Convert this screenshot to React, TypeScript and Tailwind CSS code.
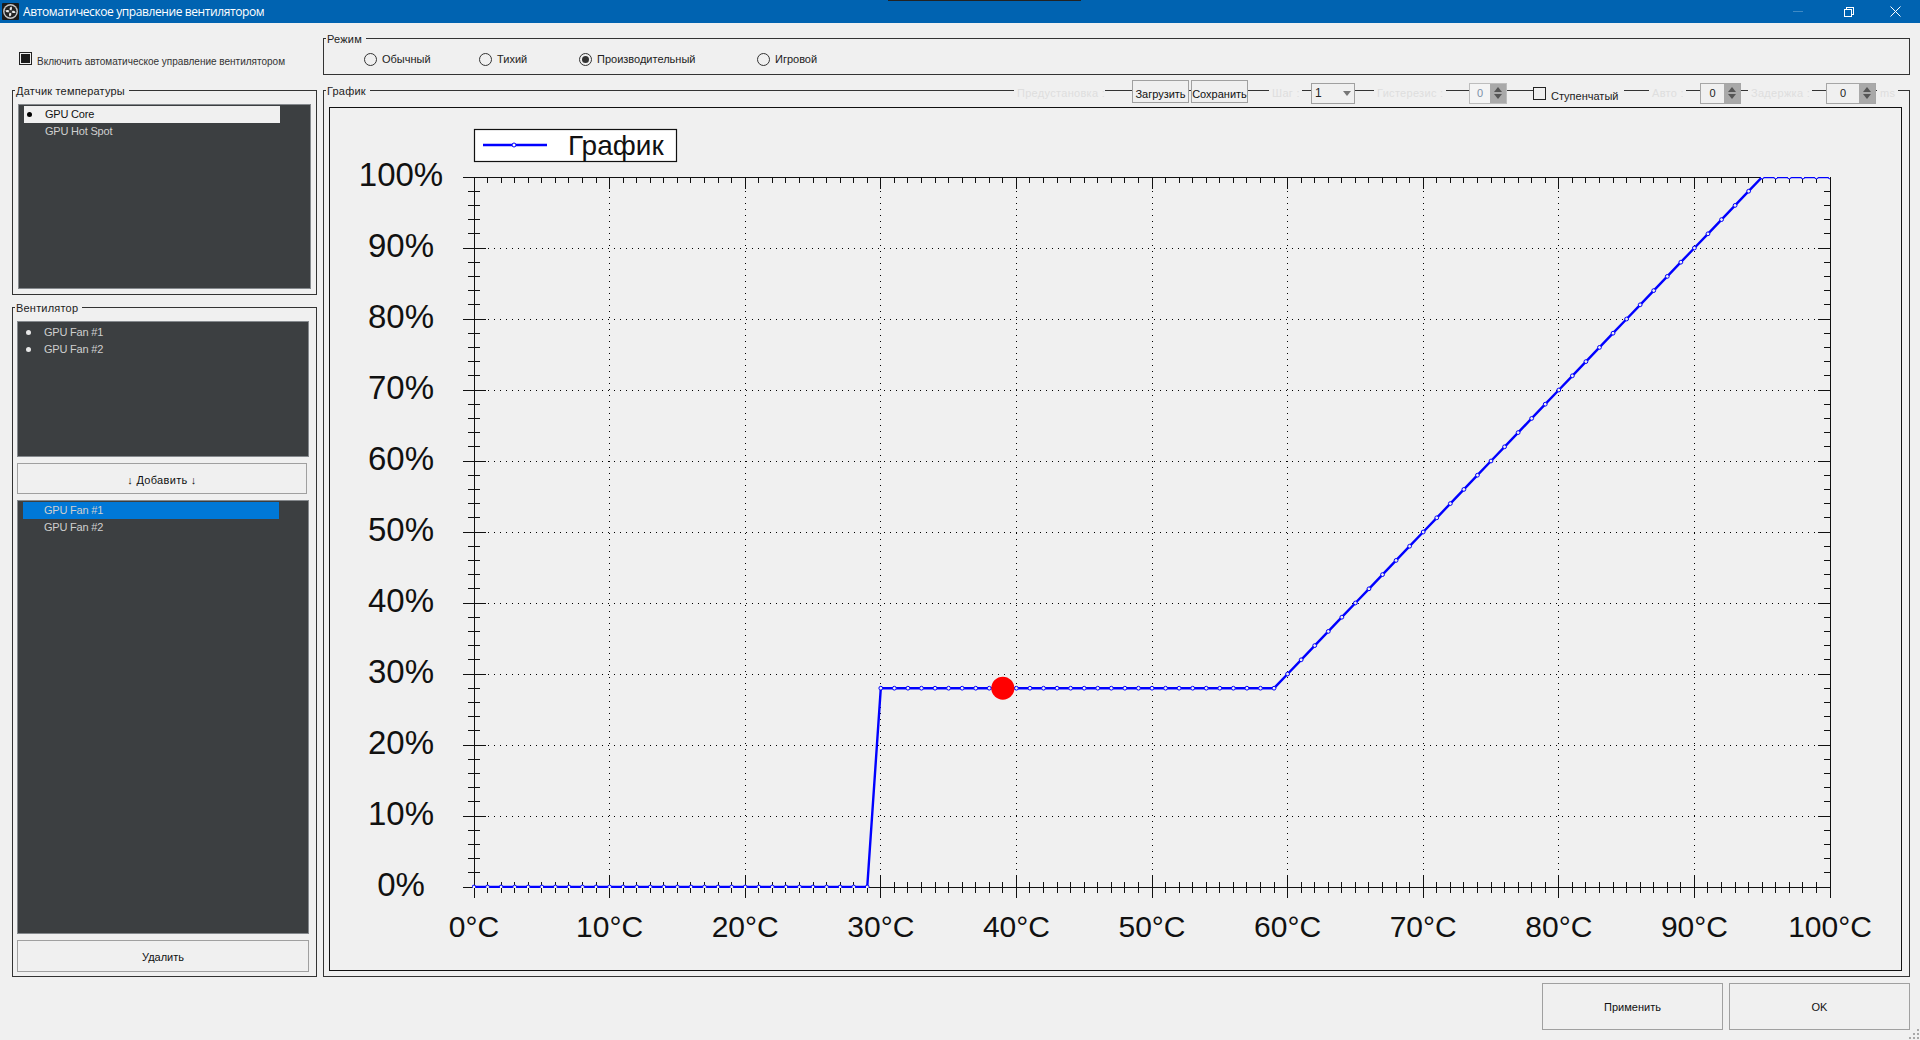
const BG = 'bg-[#f0f0f0]'

// plot area in page pixels, relative to the chart frame content (330,108)
const X0 = 144
const X_UNIT = 13.56
const Y0 = 779
const Y_UNIT = 7.1

const px = (t: number) => X0 + t * X_UNIT
const py = (v: number) => Y0 - v * Y_UNIT

const fanCurve = (t: number) => {
  if (t < 30) return 0
  if (t < 60) return 28
  return Math.min(100, (t - 45) * 2)
}

const TEMPS = Array.from({ length: 101 }, (_, i) => i)
const LEVELS = Array.from({ length: 51 }, (_, i) => i * 2)
const TENS = Array.from({ length: 11 }, (_, i) => i * 10)

function Chart() {
  const points = TEMPS.map((t) => `${px(t)},${py(fanCurve(t))}`).join(' ')
  const xEnd = px(100)
  const yTop = py(100)

  return (
    <svg width="1571" height="861" className="block">
      <defs>
        <clipPath id="plot">
          <rect x={X0 - 2} y={yTop} width={xEnd - X0 + 2} height={Y0 - yTop + 1} />
        </clipPath>
      </defs>

      {/* grid */}
      <g stroke="#000" strokeWidth="1" strokeDasharray="1 5" shapeRendering="crispEdges">
        {TENS.slice(1, 10).map((t) => (
          <line key={t} x1={px(t)} x2={px(t)} y1={yTop + 14} y2={Y0 - 17} />
        ))}
        {TENS.slice(1, 10).map((v) => (
          <line key={v} x1={X0 + 14} x2={xEnd - 14} y1={py(v)} y2={py(v)} />
        ))}
      </g>

      {/* axes */}
      <g stroke="#111" strokeWidth="1" shapeRendering="crispEdges">
        <line x1={X0 - 11} x2={xEnd} y1={yTop} y2={yTop} />
        <line x1={X0 - 11} x2={xEnd} y1={Y0} y2={Y0} />
        <line x1={X0} x2={X0} y1={yTop} y2={Y0 + 11} />
        <line x1={xEnd} x2={xEnd} y1={yTop} y2={Y0 + 11} />
        {TEMPS.map((t) => {
          const major = t % 10 === 0
          return (
            <g key={t}>
              <line x1={px(t)} x2={px(t)} y1={Y0 - (major ? 12 : 5)} y2={Y0 + (major ? 11 : 6)} />
              <line x1={px(t)} x2={px(t)} y1={yTop} y2={yTop + (major ? 12 : 6)} />
            </g>
          )
        })}
        {LEVELS.map((v) => {
          const major = v % 10 === 0
          return (
            <g key={v}>
              <line x1={X0 - (major ? 11 : 6)} x2={X0 + (major ? 12 : 6)} y1={py(v)} y2={py(v)} />
              <line x1={xEnd - (major ? 12 : 6)} x2={xEnd} y1={py(v)} y2={py(v)} />
            </g>
          )
        })}
      </g>

      {/* labels */}
      <g fill="#111" fontFamily="'Liberation Sans', Arial, sans-serif" textAnchor="middle">
        {TENS.map((v) => (
          <text key={v} x="71" y={py(v) + 8.5} fontSize="33">
            {v}%
          </text>
        ))}
        {TENS.map((t) => (
          <text key={t} x={px(t)} y="829" fontSize="30">
            {t}°C
          </text>
        ))}
      </g>

      {/* fan curve */}
      <g clipPath="url(#plot)">
        <polyline points={points} fill="none" stroke="#0000ff" strokeWidth="2.4" />
        {TEMPS.map((t) => (
          <circle key={t} cx={px(t)} cy={py(fanCurve(t))} r="1.9" fill="#f0f0f0" stroke="#0000ff" strokeWidth="1" />
        ))}
      </g>
      <circle cx={px(39)} cy={py(28)} r="11.5" fill="#ff0000" />

      {/* legend */}
      <rect x="144.5" y="21.5" width="202" height="32" fill="#fff" stroke="#111" strokeWidth="1.2" />
      <line x1="153" x2="217" y1="37" y2="37" stroke="#0000ff" strokeWidth="2.4" />
      <circle cx="184" cy="37" r="2" fill="#fff" stroke="#0000ff" strokeWidth="1" />
      <text x="238" y="47" fontSize="28" fill="#111" fontFamily="'Liberation Sans', Arial, sans-serif">
        График
      </text>
    </svg>
  )
}

function FanIcon() {
  return (
    <svg width="17" height="17" viewBox="0 0 17 17" className="shrink-0">
      <rect width="17" height="17" rx="1" fill="#1a1a1a" />
      <circle cx="8.5" cy="8.5" r="7.4" fill="#c8c8c8" />
      <circle cx="8.5" cy="8.5" r="6" fill="#222" />
      <path
        d="M8.5 8.5C7 6 7.5 4 9.5 3.4 10.5 5 10 7 8.5 8.5ZM8.5 8.5C11 7 13 7.5 13.6 9.5 12 10.5 10 10 8.5 8.5ZM8.5 8.5C10 11 9.5 13 7.5 13.6 6.5 12 7 10 8.5 8.5ZM8.5 8.5C6 10 4 9.5 3.4 7.5 5 6.5 7 7 8.5 8.5Z"
        fill="#e6e6e6"
      />
      <circle cx="8.5" cy="8.5" r="1.6" fill="#333" />
    </svg>
  )
}

function TitleBar() {
  return (
    <div className="relative flex h-[23px] shrink-0 items-center bg-[#0063b1] pl-[2px] text-white">
      <div className="absolute left-[888px] top-0 h-px w-[193px] bg-[#222]" />
      <FanIcon />
      <span className="ml-[4px] text-[12px] font-['Open_Sans','Liberation_Sans',sans-serif] tracking-[-0.4px]">
        Автоматическое управление вентилятором
      </span>
      <div className="ml-auto flex items-center">
        <div className="mr-[41px] h-px w-[10px] bg-[#3f8ac4]" />
        <svg width="10" height="10" viewBox="0 0 10 10" className="mr-[36px]" fill="none" stroke="#fff">
          <path d="M.5 2.5h7v7h-7zM2.5 2.5v-2h7v7h-2" shapeRendering="crispEdges" />
        </svg>
        <svg width="11" height="11" viewBox="0 0 11 11" className="mr-[19px]" fill="none" stroke="#fff">
          <path d="M.5.5l10 10M10.5.5l-10 10" />
        </svg>
      </div>
    </div>
  )
}

function GroupBox({ label, className, children }: { label?: string; className: string; children?: React.ReactNode }) {
  return (
    <div className={`relative border border-[#333] ${className}`}>
      {label && (
        <span className={`absolute left-[2px] top-[-7px] ${BG} pl-[1px] pr-[4px] text-[11px] leading-[14px] tracking-[0.2px] text-[#222]`}>
          {label}
        </span>
      )}
      {children}
    </div>
  )
}

function ListBox({ className, children }: { className: string; children: React.ReactNode }) {
  return <div className={`border border-[#85898d] bg-[#3c3f41] ${className}`}>{children}</div>
}

function ListRow({
  label,
  bullet,
  selected,
  focused,
}: {
  label: string
  bullet?: 'dark' | 'light'
  selected?: boolean
  focused?: boolean
}) {
  const rowBg = selected ? 'bg-[#0078d7]' : focused ? 'bg-[#f0f0f0]' : ''
  const textColor = focused ? 'text-[#111]' : 'text-[#cfcfcf]'
  return (
    <div className={`flex h-[17px] w-[256px] items-center text-[11px] tracking-[-0.2px] ${rowBg} ${textColor}`}>
      <span className="flex w-[21px] pl-[3px]">
        {bullet && <span className={`h-[5px] w-[5px] rounded-full ${bullet === 'dark' ? 'bg-black' : 'bg-[#e8e8e8]'}`} />}
      </span>
      {label}
    </div>
  )
}

function FlatButton({ className, children }: { className: string; children: React.ReactNode }) {
  return (
    <div className={`flex items-center justify-center border border-[#a0a0a0] text-[11px] text-[#111] ${className}`}>
      {children}
    </div>
  )
}

function Radio({ label, checked, className }: { label: string; checked?: boolean; className: string }) {
  return (
    <div className={`flex items-center ${className}`}>
      <span className="flex h-[13px] w-[13px] items-center justify-center rounded-full border border-[#333]">
        {checked && <span className="h-[7px] w-[7px] rounded-full bg-[#333]" />}
      </span>
      <span className="ml-[5px] text-[11px] text-[#222]">{label}</span>
    </div>
  )
}

function Muted({ className, children }: { className: string; children: React.ReactNode }) {
  return (
    <span className={`mt-[4px] shrink-0 whitespace-nowrap pl-[3px] text-[11px] leading-[14px] tracking-[0.3px] text-[#dedede] ${BG} ${className}`}>
      {children}
    </span>
  )
}

function Spinner({ value, textWidth, faded }: { value: string; textWidth: string; faded?: boolean }) {
  return (
    <div className={`mt-[4px] flex h-[21px] shrink-0 items-stretch border ${faded ? 'border-[#bdbdbd] bg-[#f4f4f4]' : `border-[#a6a6a6] ${BG}`}`}>
      <span className={`flex items-center justify-center text-[11px] ${faded ? 'text-[#7d8fa8]' : 'text-[#222]'} ${textWidth}`}>{value}</span>
      <span className="flex w-[16px] flex-col items-center justify-center gap-[2px] bg-[#a9a9a9]">
        <span className="h-0 w-0 border-x-[4px] border-b-[5px] border-x-transparent border-b-[#555]" />
        <span className="h-0 w-0 border-x-[4px] border-t-[5px] border-x-transparent border-t-[#555]" />
      </span>
    </div>
  )
}

function ChartToolbar() {
  return (
    <div className="absolute left-[690px] top-[-12px] flex h-[24px] items-center">
      <Muted className="w-[91px]">Предустановка :</Muted>
      <FlatButton className={`ml-[27px] mt-[1px] h-[23px] w-[57px] shrink-0 pt-[5px] text-[9px] ${BG}`}>Загрузить</FlatButton>
      <FlatButton className={`ml-[2px] mt-[1px] h-[23px] w-[57px] shrink-0 pt-[5px] text-[9px] ${BG}`}>Сохранить</FlatButton>
      <Muted className="ml-[21px] w-[33px]">Шаг :</Muted>
      <div className={`ml-[9px] mt-[4px] flex h-[21px] w-[44px] shrink-0 items-center justify-between border border-[#a0a0a0] px-[3px] ${BG}`}>
        <span className="text-[12px] text-[#222]">1</span>
        <span className="h-0 w-0 border-x-[4px] border-t-[5px] border-x-transparent border-t-[#777]" />
      </div>
      <Muted className="ml-[19px] w-[72px]">Гистерезис :</Muted>
      <div className="ml-[23px]">
        <Spinner value="0" textWidth="w-[20px]" faded />
      </div>
      <div className="ml-[26px] mt-[5px] flex shrink-0 items-center">
        <span className={`h-[13px] w-[13px] border border-[#222] ${BG}`} />
        <span className={`w-[78px] ${BG} whitespace-nowrap pl-[5px] pt-[4px] text-[11px] leading-[14px] text-[#222]`}>Ступенчатый</span>
      </div>
      <Muted className="ml-[25px] w-[37px]">Авто :</Muted>
      <div className="ml-[14px]">
        <Spinner value="0" textWidth="w-[23px]" />
      </div>
      <Muted className="ml-[7px] w-[64px]">Задержка :</Muted>
      <div className="ml-[14px]">
        <Spinner value="0" textWidth="w-[32px]" />
      </div>
      <Muted className="ml-[1px] w-[21px]">ms</Muted>
    </div>
  )
}

export default function App() {
  return (
    <div className={`flex h-[1040px] w-[1920px] flex-col overflow-hidden ${BG} font-['Liberation_Sans',Arial,sans-serif]`}>
      <TitleBar />

      <div className="flex h-[954px] shrink-0 pl-[12px]">
        {/* left column */}
        <div className="flex w-[305px] flex-col">
          <div className="flex h-[67px] items-start pl-[7px] pt-[29px]">
            <span className="flex h-[13px] w-[13px] items-center justify-center border border-[#222]">
              <span className="h-[9px] w-[9px] bg-[#1c1c1c]" />
            </span>
            <span className="ml-[5px] mt-[3px] text-[10px] leading-[14px] text-[#333]">
              Включить автоматическое управление вентилятором
            </span>
          </div>

          <GroupBox label="Датчик температуры" className="h-[205px] px-[5px] pt-[13px]">
            <ListBox className="h-[185px] w-[293px] pl-[5px] pt-[1px]">
              <ListRow label="GPU Core" bullet="dark" focused />
              <ListRow label="GPU Hot Spot" />
            </ListBox>
          </GroupBox>

          <GroupBox label="Вентилятор" className="mt-[12px] flex h-[670px] flex-col px-[4px] pt-[13px]">
            <ListBox className="h-[136px] w-[292px] pl-[5px] pt-[2px]">
              <ListRow label="GPU Fan #1" bullet="light" />
              <ListRow label="GPU Fan #2" bullet="light" />
            </ListBox>
            <FlatButton className="mt-[6px] h-[31px] w-[290px] pt-[3px] tracking-[0.3px]">↓ Добавить ↓</FlatButton>
            <ListBox className="mt-[6px] h-[434px] w-[292px] pl-[5px] pt-[1px]">
              <ListRow label="GPU Fan #1" selected />
              <ListRow label="GPU Fan #2" />
            </ListBox>
            <FlatButton className="mt-[6px] h-[32px] w-[292px] pt-[2px]">Удалить</FlatButton>
          </GroupBox>
        </div>

        {/* right column */}
        <div className="ml-[6px] flex w-[1587px] flex-col pt-[15px]">
          <GroupBox label="Режим" className="h-[37px]">
            <div className="flex h-full items-center pt-[6px]">
              <Radio label="Обычный" className="ml-[40px] w-[115px]" />
              <Radio label="Тихий" className="w-[100px]" />
              <Radio label="Производительный" checked className="w-[178px]" />
              <Radio label="Игровой" className="w-[80px]" />
            </div>
          </GroupBox>

          <GroupBox label="График" className="mt-[15px] h-[887px] pl-[5px] pt-[16px]">
            <ChartToolbar />
            <div className="h-[864px] w-[1573px] border border-[#111]">
              <Chart />
            </div>
          </GroupBox>
        </div>
      </div>

      {/* bottom buttons */}
      <div className="relative flex justify-end gap-[6px] pr-[10px] pt-[6px]">
        <FlatButton className="h-[47px] w-[181px] pt-[2px]">Применить</FlatButton>
        <FlatButton className="h-[47px] w-[181px] pt-[2px]">OK</FlatButton>
        <svg width="12" height="12" viewBox="0 0 12 12" className="absolute bottom-[-10px] right-0" fill="#a8a8a8">
          <path d="M9 1h2v2H9zM5 5h2v2H5zM9 5h2v2H9zM1 9h2v2H1zM5 9h2v2H5zM9 9h2v2H9z" />
        </svg>
      </div>
    </div>
  )
}
